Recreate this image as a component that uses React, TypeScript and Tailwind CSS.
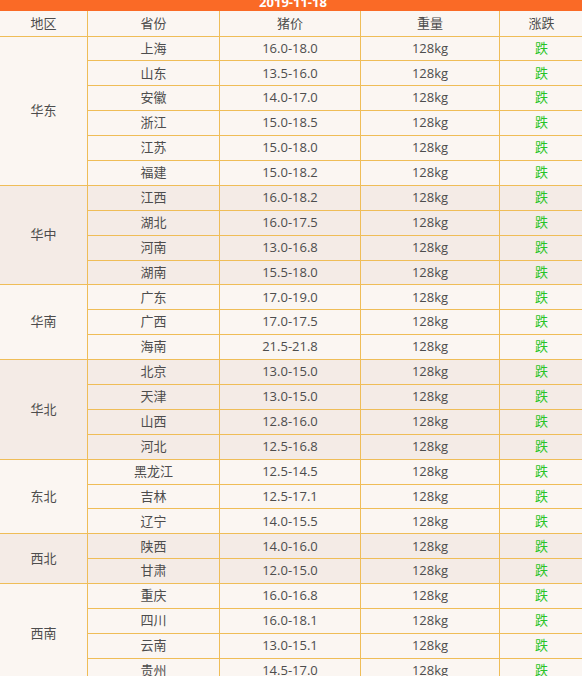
import React from 'react';

type Row = { province: string; price: string };
type Group = { region: string; rows: Row[] };

const groups: Group[] = [
  {
    region: '华东',
    rows: [
      { province: '上海', price: '16.0-18.0' },
      { province: '山东', price: '13.5-16.0' },
      { province: '安徽', price: '14.0-17.0' },
      { province: '浙江', price: '15.0-18.5' },
      { province: '江苏', price: '15.0-18.0' },
      { province: '福建', price: '15.0-18.2' },
    ],
  },
  {
    region: '华中',
    rows: [
      { province: '江西', price: '16.0-18.2' },
      { province: '湖北', price: '16.0-17.5' },
      { province: '河南', price: '13.0-16.8' },
      { province: '湖南', price: '15.5-18.0' },
    ],
  },
  {
    region: '华南',
    rows: [
      { province: '广东', price: '17.0-19.0' },
      { province: '广西', price: '17.0-17.5' },
      { province: '海南', price: '21.5-21.8' },
    ],
  },
  {
    region: '华北',
    rows: [
      { province: '北京', price: '13.0-15.0' },
      { province: '天津', price: '13.0-15.0' },
      { province: '山西', price: '12.8-16.0' },
      { province: '河北', price: '12.5-16.8' },
    ],
  },
  {
    region: '东北',
    rows: [
      { province: '黑龙江', price: '12.5-14.5' },
      { province: '吉林', price: '12.5-17.1' },
      { province: '辽宁', price: '14.0-15.5' },
    ],
  },
  {
    region: '西北',
    rows: [
      { province: '陕西', price: '14.0-16.0' },
      { province: '甘肃', price: '12.0-15.0' },
    ],
  },
  {
    region: '西南',
    rows: [
      { province: '重庆', price: '16.0-16.8' },
      { province: '四川', price: '16.0-18.1' },
      { province: '云南', price: '13.0-15.1' },
      { province: '贵州', price: '14.5-17.0' },
    ],
  },
];

const cell = 'border border-[#efbd58] text-center align-middle p-0';

export default function App() {
  return (
    <div
      className="w-[582px] h-[676px] overflow-hidden bg-[#fbf6f2] text-[13px] text-[#4d4d4d]"
      style={{ fontFamily: '"Open Sans", "Noto Sans CJK SC", sans-serif' }}
    >
      {/* date banner, top clipped */}
      <div className="h-[11px] overflow-hidden bg-[#fa6a26] flex items-end justify-center">
        <span className="text-white font-bold text-[13px] leading-[13px] pb-[2px] pl-[4px]">2019-11-18</span>
      </div>

      <table className="w-[584px] -ml-px border-collapse table-fixed">
        <colgroup>
          <col className="w-[88px]" />
          <col className="w-[132px]" />
          <col className="w-[141px]" />
          <col className="w-[139px]" />
          <col className="w-[84px]" />
        </colgroup>
        <thead>
          <tr className="h-[25px] bg-[#fbf6f2]">
            <th className={`${cell} border-t-0 font-normal`}>地区</th>
            <th className={`${cell} border-t-0 font-normal`}>省份</th>
            <th className={`${cell} border-t-0 font-normal`}>猪价</th>
            <th className={`${cell} border-t-0 font-normal`}>重量</th>
            <th className={`${cell} border-t-0 font-normal`}>涨跌</th>
          </tr>
        </thead>
        <tbody>
          {groups.map((g, gi) => {
            const bg = gi % 2 === 0 ? 'bg-[#fbf6f2]' : 'bg-[#f4ebe6]';
            return g.rows.map((r, ri) => (
              <tr key={g.region + r.province} className={`h-[24.9px] ${bg}`}>
                {ri === 0 && (
                  <td rowSpan={g.rows.length} className={cell}>
                    {g.region}
                  </td>
                )}
                <td className={cell}>{r.province}</td>
                <td className={cell}>{r.price}</td>
                <td className={cell}>128kg</td>
                <td className={`${cell} text-[#27c427]`}>跌</td>
              </tr>
            ));
          })}
        </tbody>
      </table>
    </div>
  );
}
